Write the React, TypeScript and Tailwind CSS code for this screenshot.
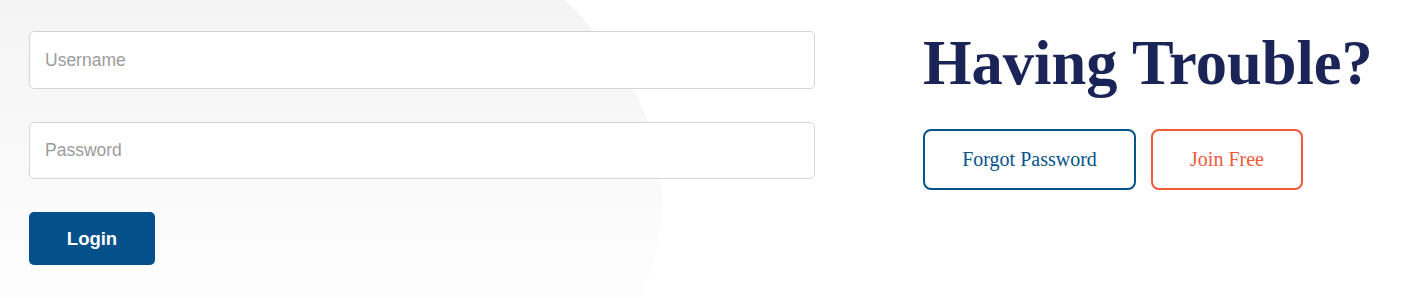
import { memo } from 'react';

/**
 * Login panel with a "Having Trouble?" help column on the right.
 */
function App() {
  return (
    <div className="relative h-[298px] w-[1414px] overflow-hidden bg-white">
      {/* Decorative soft backdrop behind the form */}
      <div
        aria-hidden="true"
        className="pointer-events-none absolute left-[-662px] top-[-183px] h-[766px] w-[1324px] rounded-[50%] bg-linear-to-b from-[#f3f3f3] from-20% to-[#fefefe] to-65%"
      />

      <div className="relative flex pl-[29px] pt-[31px]">
        {/* Login form */}
        <form
          className="flex w-[786px] flex-col font-['Liberation_Sans',Arial,sans-serif]"
          onSubmit={(e) => e.preventDefault()}
        >
          <input
            type="text"
            placeholder="Username"
            className="h-[58px] w-full rounded-[5px] border border-[#d4d4d4] bg-white px-[15px] text-[17.5px] text-[#333] outline-none placeholder:text-[#9b9b9b]"
          />
          <input
            type="password"
            placeholder="Password"
            className="mt-[33px] h-[57px] w-full rounded-[5px] border border-[#d4d4d4] bg-white px-[15px] text-[17.5px] text-[#333] outline-none placeholder:text-[#9b9b9b]"
          />
          <button
            type="submit"
            className="mt-[33px] flex h-[53px] w-[126px] items-center justify-center rounded-[5px] bg-[#03508a] text-[18.5px] font-bold text-white"
          >
            Login
          </button>
        </form>

        {/* Help links */}
        <div className="ml-[108px] flex flex-col font-['Liberation_Serif','Times_New_Roman',serif]">
          <h2 className="mt-[1px] text-[62.5px] font-bold leading-none text-[#1b2456]">
            Having Trouble?
          </h2>
          <div className="mt-[34px] flex gap-[15px]">
            <a
              href="#"
              className="flex h-[61px] w-[213px] items-center justify-center rounded-[8px] border-2 border-[#06538b] text-[20px] text-[#06538b]"
            >
              Forgot Password
            </a>
            <a
              href="#"
              className="flex h-[61px] w-[152px] items-center justify-center rounded-[8px] border-2 border-[#f05a3c] text-[20px] text-[#f05a3c]"
            >
              Join Free
            </a>
          </div>
        </div>
      </div>
    </div>
  );
}

export default memo(App);
